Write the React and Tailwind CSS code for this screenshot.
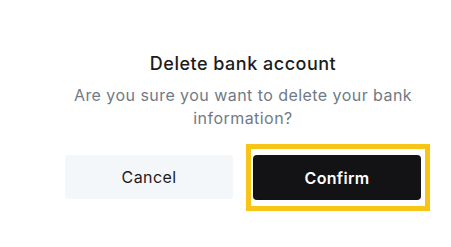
export default function App() {
  return (
    <div className="w-[451px] h-[247px] bg-white overflow-hidden" style={{ fontFamily: 'Inter, "Open Sans", sans-serif' }}>
      <div className="ml-[65px] w-[356px] pt-[50px] flex flex-col items-center">
        <h2 className="text-[18px] leading-[27px] font-medium tracking-[0.5px] text-[#1c1c1c]">Delete bank account</h2>
        <p className="mt-[7px] text-[16px] leading-[23px] tracking-[0.45px] text-[#707a86] text-center">
          Are you sure you want to delete your bank information?
        </p>
        <div className="mt-[25px] w-full grid grid-cols-2 gap-5">
          <button className="h-[44px] rounded-[3px] bg-[#f4f7fa] text-[16px] font-normal tracking-[0.4px] text-[#1c1c1c]">
            Cancel
          </button>
          <div className="relative">
            <button className="w-full h-[45px] rounded-[4px] bg-[#131316] text-[16px] font-semibold tracking-[0.3px] text-white">
              Confirm
            </button>
            {/* highlight frame */}
            <div className="absolute left-[-7px] right-[-9px] top-[-11px] bottom-[-11px] border-[5px] border-[#f8c416] pointer-events-none" />
          </div>
        </div>
      </div>
    </div>
  );
}
